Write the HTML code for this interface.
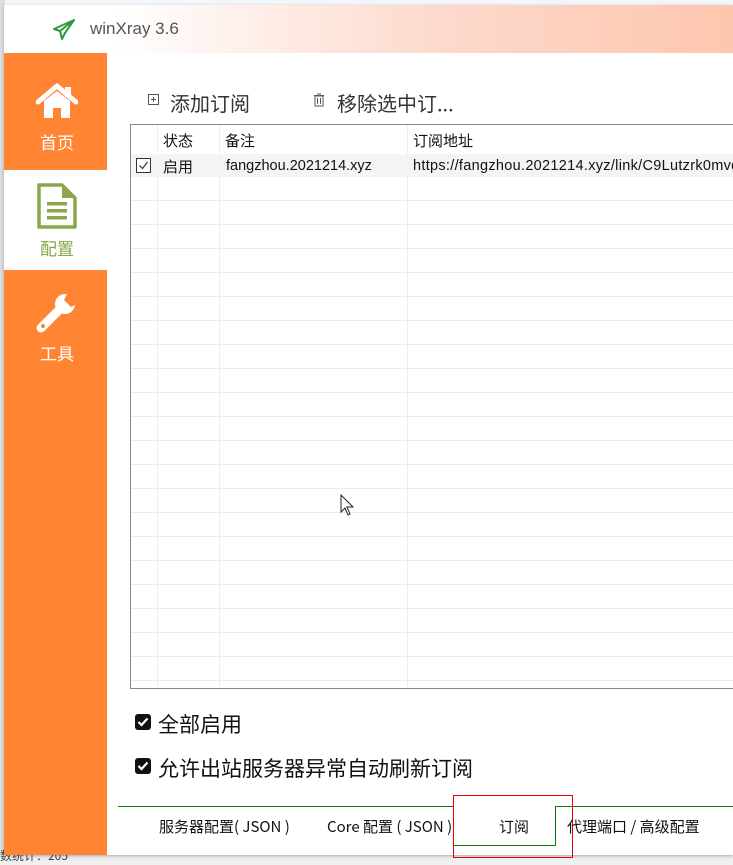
<!DOCTYPE html>
<html><head><meta charset="utf-8"><style>
*{margin:0;padding:0;box-sizing:border-box}
body{width:733px;height:865px;overflow:hidden;background:#f0f0f0;position:relative;font-family:"Liberation Sans","Noto Sans CJK SC",sans-serif;color:#111}
.a{position:absolute}
.cjk{font-family:"Noto Sans CJK SC","Liberation Sans",sans-serif}
</style></head><body>
<div class="a" style="left:0;top:0;width:733px;height:6px;background:#f3f6fb"></div>
<div class="a" style="left:0;top:0;width:5px;height:865px;background:#ddd"></div>
<div class="a" style="left:0;top:855px;width:733px;height:10px;background:#f0f0f0;font-size:12px;color:#444"><span style="position:absolute;top:-8px;left:0" class="cjk">数统计：205</span></div>
<div class="a" style="left:4px;top:5px;width:729px;height:850px;background:#fff;box-shadow:0 1px 3px rgba(0,0,0,.3)"></div>
<div class="a" style="left:4px;top:5px;width:729px;height:48px;background:linear-gradient(90deg,#fff 0%,#fff 15%,#fdd9cc 60%,#fdc6ae 100%)"></div>
<svg class="a" style="left:52px;top:19px" width="24" height="22" viewBox="0 0 24 22"><path d="M22 1 L2 10 L8 12 L10 20 L13 14 Z M8 12 L22 1 L13 14" fill="none" stroke="#2e9a3a" stroke-width="2" stroke-linejoin="round"/></svg>
<div class="a" style="left:90px;top:19px;font-size:17px;color:#555">winXray 3.6</div>
<div class="a" style="left:4px;top:53px;width:103px;height:802px;background:#ff8533"></div>
<div class="a" style="left:4px;top:170px;width:103px;height:100px;background:#fff"></div>
<svg class="a" style="left:36px;top:83px" width="42" height="36" viewBox="0 0 42 36"><path d="M2 19 L21 3 L40 19" fill="none" stroke="#fff" stroke-width="5" stroke-linejoin="round" stroke-linecap="round"/><path d="M8 18 L21 8 L34 18 V35 H25 V25 H17 V35 H8 Z" fill="#fff"/><rect x="29" y="4" width="6" height="10" fill="#fff"/></svg>
<div class="a cjk" style="left:40px;top:129px;font-size:17px;color:#fff">首页</div>
<svg class="a" style="left:37px;top:183px" width="40" height="46" viewBox="0 0 40 46"><path d="M2 2 H25 L38 15 V44 H2 Z" fill="none" stroke="#8aa64a" stroke-width="3.5" stroke-linejoin="round"/><path d="M25 2 V15 H38" fill="#8aa64a"/><rect x="10" y="19" width="20" height="3.5" fill="#8aa64a"/><rect x="10" y="26" width="20" height="3.5" fill="#8aa64a"/><rect x="10" y="33" width="20" height="3.5" fill="#8aa64a"/></svg>
<div class="a cjk" style="left:40px;top:235px;font-size:17px;color:#8aa64a">配置</div>
<svg class="a" style="left:35px;top:290px" width="44" height="44" viewBox="0 0 44 44"><path d="M6 38 L24 20" stroke="#fff" stroke-width="9" stroke-linecap="round"/><circle cx="30" cy="14" r="10" fill="#fff"/><path d="M33 2 L29 10 L36 17 L44 13 L44 2 Z" fill="#ff8533"/><circle cx="8" cy="36" r="2" fill="#ff8533"/></svg>
<div class="a cjk" style="left:40px;top:340px;font-size:17px;color:#fff">工具</div>
<svg class="a" style="left:148px;top:94px" width="12" height="12"><rect x="0.5" y="0.5" width="10" height="10" fill="none" stroke="#555"/><path d="M3 5.5H8M5.5 3V8" stroke="#555"/></svg>
<div class="a cjk" style="left:170px;top:88px;font-size:20px;color:#333">添加订阅</div>
<svg class="a" style="left:313px;top:93px" width="12" height="14"><rect x="2" y="3" width="8" height="10" fill="none" stroke="#555"/><path d="M1 2.5H11M4 1H8M4.5 5V11M7.5 5V11" stroke="#555"/></svg>
<div class="a cjk" style="left:337px;top:88px;font-size:20px;color:#333">移除选中订...</div>
<div class="a" style="left:130px;top:124px;width:610px;height:565px;border:1px solid #888;background:#fff;overflow:hidden">
<div class="a" style="left:26px;top:0;width:1px;height:565px;background:#ececec"></div>
<div class="a" style="left:88px;top:0;width:1px;height:565px;background:#ececec"></div>
<div class="a" style="left:276px;top:0;width:1px;height:565px;background:#ececec"></div>
<div class="a cjk" style="left:32px;top:5px;font-size:15px">状态</div>
<div class="a cjk" style="left:94px;top:5px;font-size:15px">备注</div>
<div class="a cjk" style="left:282px;top:5px;font-size:15px">订阅地址</div>
<div class="a" style="left:0;top:29px;width:610px;height:23px;background:#f4f4f4"></div>
<svg class="a" style="left:5px;top:33px" width="16" height="16"><rect x="0.5" y="0.5" width="14" height="14" fill="#fff" stroke="#333"/><path d="M3.5 7.5L6.5 10.5L11.5 4" fill="none" stroke="#333" stroke-width="1.2"/></svg>
<div class="a cjk" style="left:32px;top:31px;font-size:15px">启用</div>
<div class="a" style="left:95px;top:33px;font-size:14.5px">fangzhou.2021214.xyz</div>
<div class="a" style="left:282px;top:33px;font-size:14.5px;white-space:nowrap;letter-spacing:0.3px">https://fangzhou.2021214.xyz/link/C9Lutzrk0mvd</div>
<div class="a" style="left:0;top:52px;width:610px;height:520px;background:repeating-linear-gradient(180deg,#fff 0,#fff 23px,#ececec 23px,#ececec 24px)"></div>
<div class="a" style="left:26px;top:52px;width:1px;height:520px;background:#ececec"></div>
<div class="a" style="left:88px;top:52px;width:1px;height:520px;background:#ececec"></div>
<div class="a" style="left:276px;top:52px;width:1px;height:520px;background:#ececec"></div>
</div>
<svg class="a" style="left:340px;top:494px" width="16" height="24"><path d="M1 1V18L5 14L8 21L10 20L7 13H13Z" fill="#fff" stroke="#222"/></svg>
<svg class="a" style="left:135px;top:714px" width="16" height="16"><rect width="16" height="16" rx="3" fill="#111"/><path d="M3.5 8L6.5 11L12.5 4.5" fill="none" stroke="#fff" stroke-width="2.2"/></svg>
<div class="a cjk" style="left:158px;top:709px;font-size:21px">全部启用</div>
<svg class="a" style="left:135px;top:758px" width="16" height="16"><rect width="16" height="16" rx="3" fill="#111"/><path d="M3.5 8L6.5 11L12.5 4.5" fill="none" stroke="#fff" stroke-width="2.2"/></svg>
<div class="a cjk" style="left:158px;top:753px;font-size:21px">允许出站服务器异常自动刷新订阅</div>
<svg class="a" style="left:0;top:790px" width="733" height="75"><path d="M118 16.5H453.5V55.5H555.5V16.5H733" fill="none" stroke="#0a7d0a" stroke-width="1"/><rect x="453.5" y="5.5" width="119" height="62" fill="none" stroke="#e00" stroke-width="1"/></svg>
<div class="a cjk" style="left:159px;top:816px;font-size:15px">服务器配置( JSON )</div>
<div class="a cjk" style="left:327px;top:816px;font-size:15px">Core 配置 ( JSON )</div>
<div class="a cjk" style="left:499px;top:816px;font-size:15px">订阅</div>
<div class="a cjk" style="left:567px;top:816px;font-size:15px">代理端口 / 高级配置</div>
</body></html>
